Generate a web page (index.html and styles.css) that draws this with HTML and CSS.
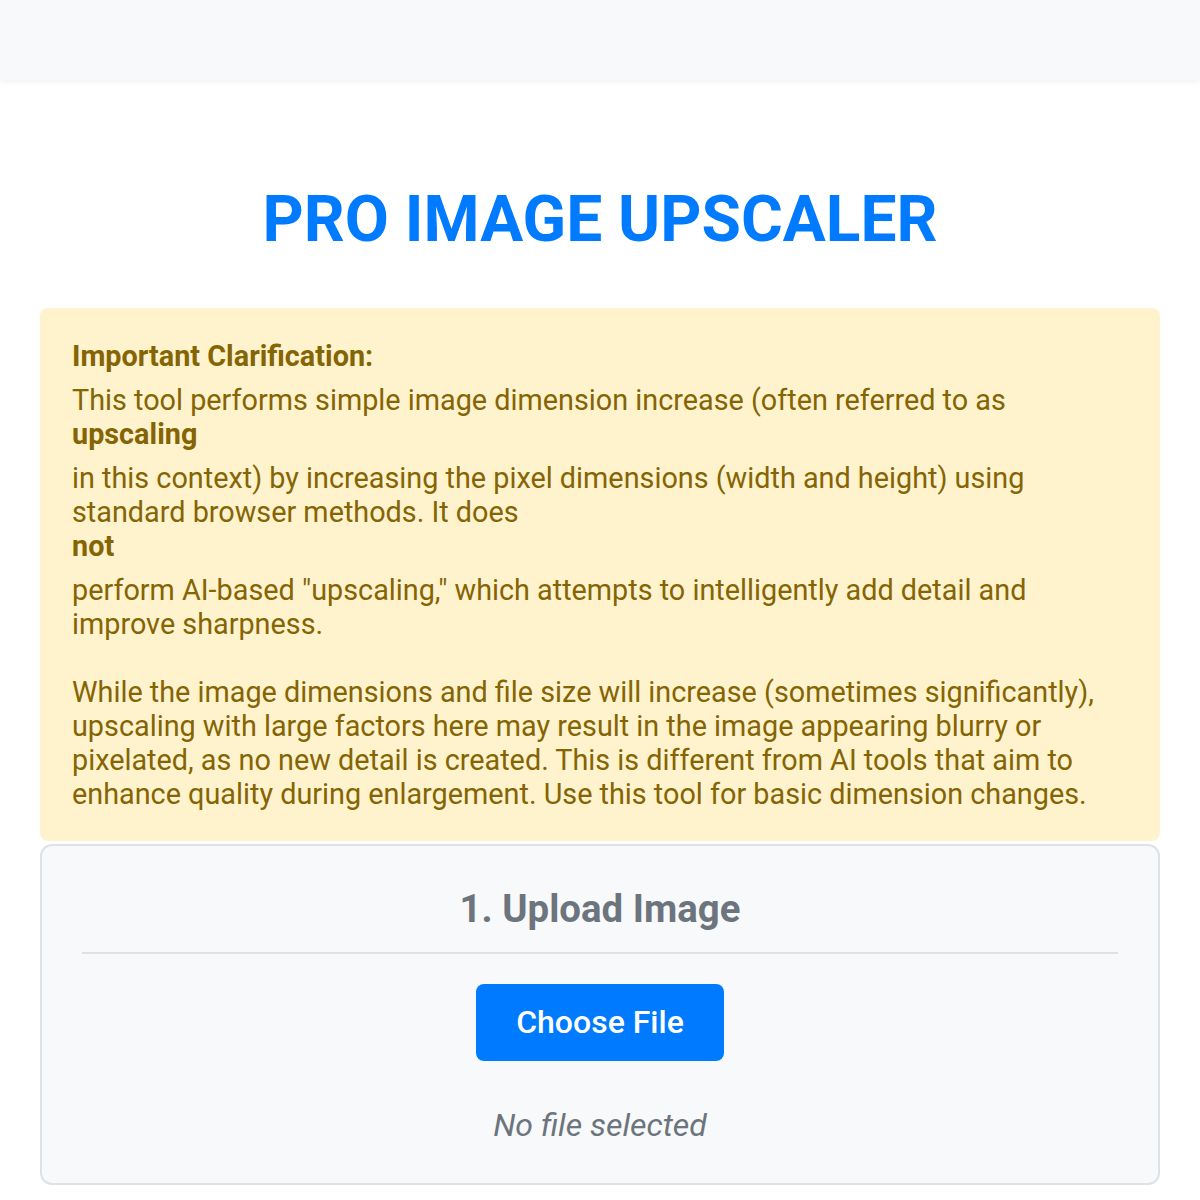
FILE: index.html
```html
<!DOCTYPE html>
<html lang="en">
<head>
    <meta charset="UTF-8">
    <meta name="viewport" content="width=device-width, initial-scale=1.0">
    <title>Pro Image Upscaler</title>
    <link rel="stylesheet" href="styles.css">
</head>
<body>
    <header class="top-bar"></header>

    <main class="container">
        <h1 class="title">PRO IMAGE UPSCALER</h1>

        <div class="notice">
            <strong>Important Clarification:</strong>
            <p>
                This tool performs simple image dimension increase (often referred to as
                <strong>upscaling</strong>
                in this context) by increasing the pixel dimensions (width and height) using standard browser methods. It does
                <strong>not</strong>
                perform AI-based "upscaling," which attempts to intelligently add detail and improve sharpness.
                <br><br>
                While the image dimensions and file size will increase (sometimes significantly), upscaling with large factors here may result in the image appearing blurry or pixelated, as no new detail is created. This is different from AI tools that aim to enhance quality during enlargement. Use this tool for basic dimension changes.
            </p>
        </div>

        <section class="panel">
            <h2 class="panel-title">1. Upload Image</h2>
            <label for="fileInput" class="button">Choose File</label>
            <input type="file" id="fileInput" accept="image/*" hidden>
            <p id="fileName" class="file-name">No file selected</p>
        </section>
    </main>
</body>
</html>
```

FILE: styles.css
```css
body {
    font-family: Roboto, "Liberation Sans", Arial, sans-serif;
    margin: 0;
    background-color: #fff;
    color: #212529;
}
.top-bar {
    height: 80px;
    background-color: #f8f9fa;
    box-shadow: 0 2px 6px rgba(0, 0, 0, 0.06);
}
.container {
    padding: 0 40px;
}
.title {
    margin: 98px 0 46px;
    font-size: 64px;
    font-weight: 700;
    line-height: 84px;
    text-align: center;
    color: #007bff;
}
.notice {
    background-color: #fff3cd;
    color: #856404;
    border-radius: 8px;
    padding: 31px 32px 30px;
    font-size: 28.8px;
    line-height: 34px;
}
.notice strong {
    display: block;
    font-weight: 700;
    margin-bottom: 10px;
}
.notice p {
    margin: 0;
}
.panel {
    margin-top: 3px;
    background-color: #f8f9fa;
    border: 2px solid #dee2e6;
    border-radius: 12px;
    padding: 0 40px 38px;
    text-align: center;
}
.panel-title {
    margin: 0 0 30px;
    padding: 40px 0 20px;
    font-size: 38.4px;
    font-weight: 700;
    line-height: 46px;
    color: #6c757d;
    border-bottom: 2px solid #dee2e6;
}
.button {
    display: inline-block;
    padding: 21px 40px;
    color: #fff;
    background-color: #007bff;
    border-radius: 8px;
    font-size: 32px;
    font-weight: 500;
    line-height: 35px;
    cursor: pointer;
}
.button:hover {
    background-color: #0056b3;
}
.file-name {
    margin: 44px 0 0;
    font-size: 32px;
    font-style: italic;
    line-height: 40px;
    color: #6c757d;
}
```
